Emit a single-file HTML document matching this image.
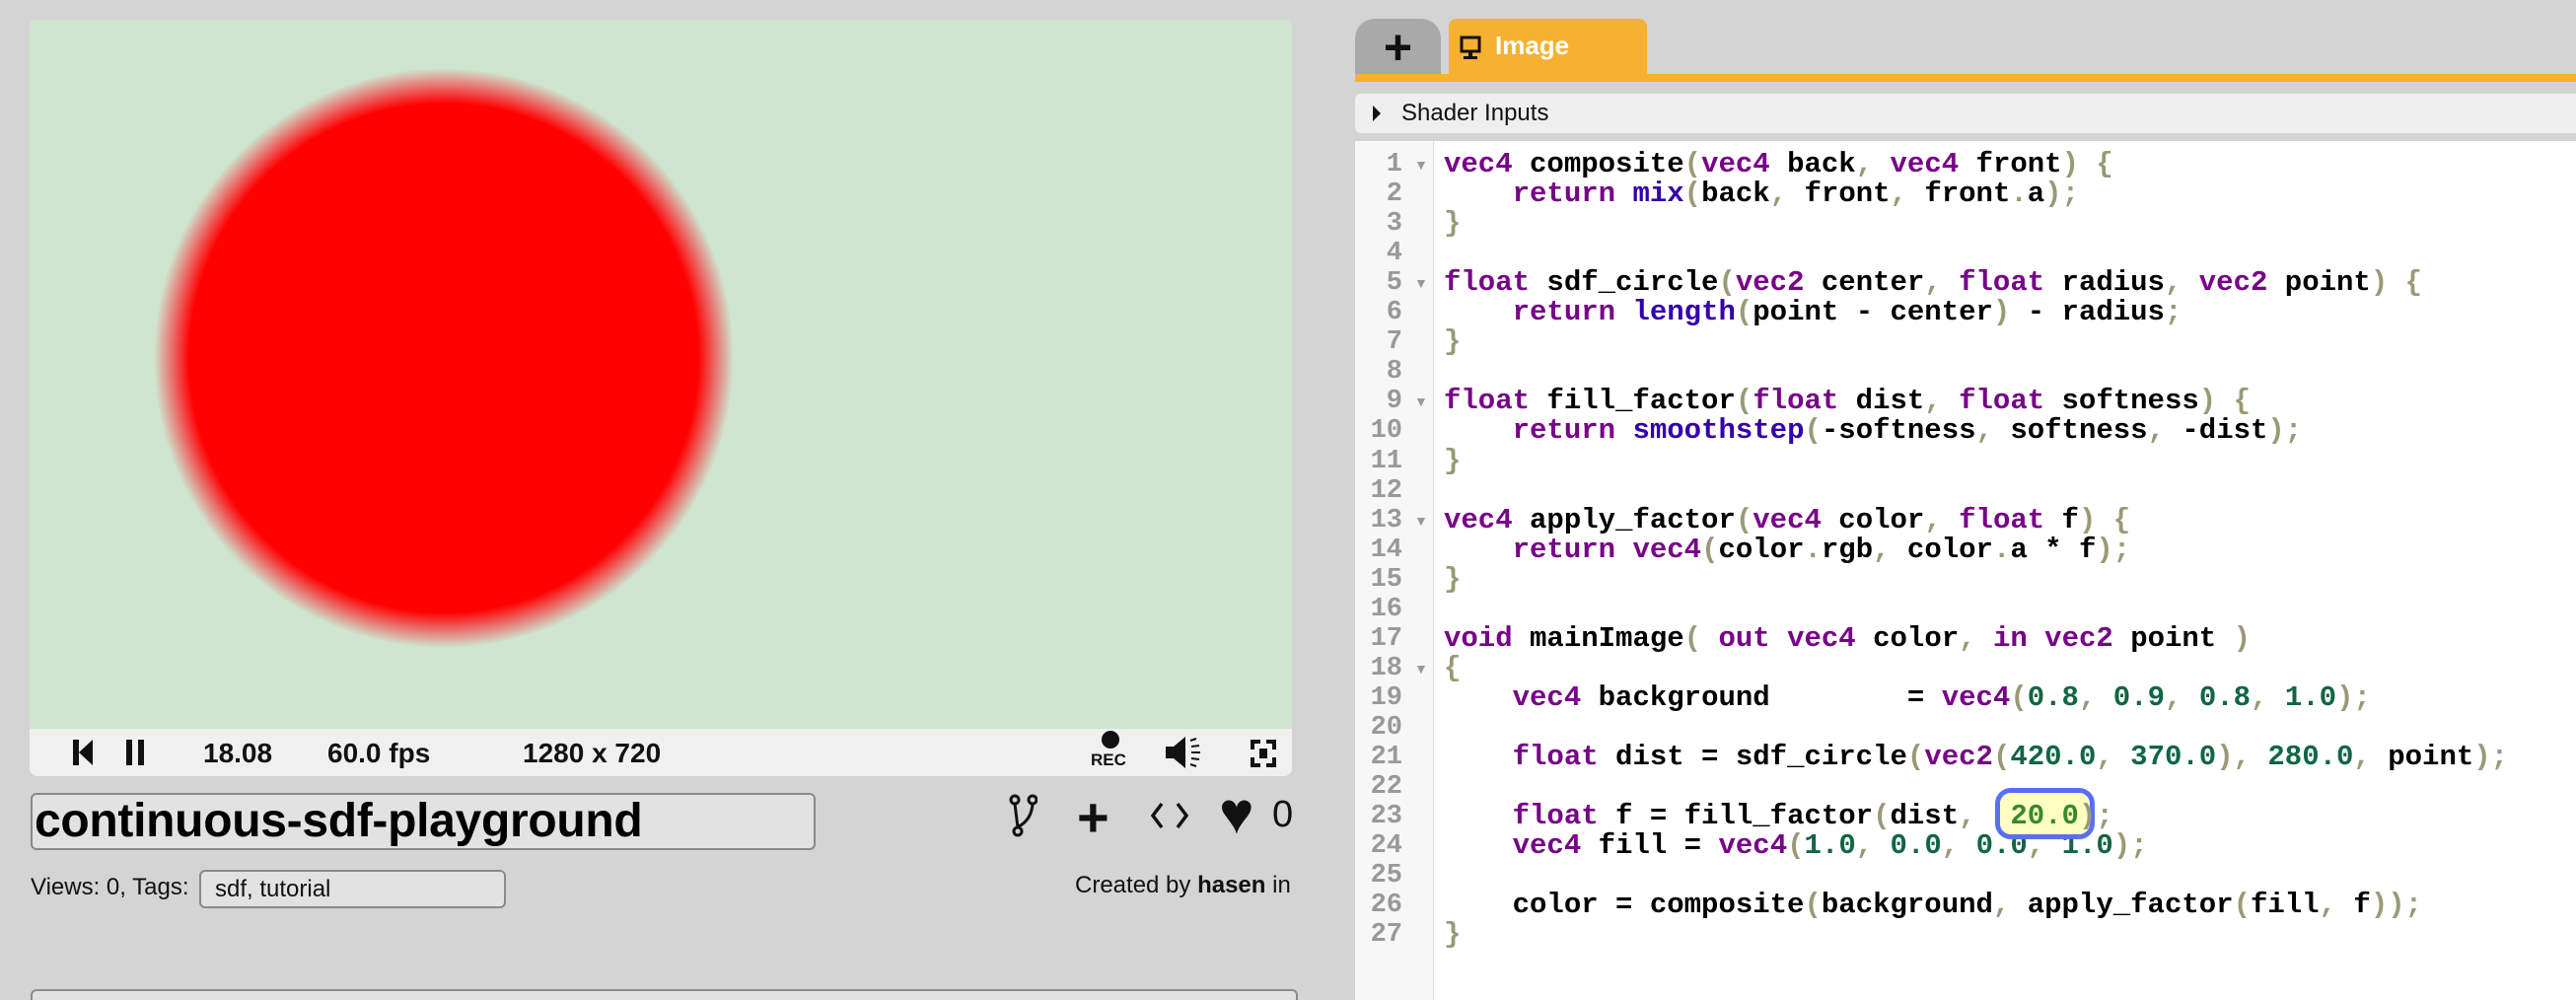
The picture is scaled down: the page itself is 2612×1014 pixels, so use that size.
<!DOCTYPE html>
<html style="overflow:hidden;height:1014px"><head><meta charset="utf-8"><style>
*{margin:0;padding:0;box-sizing:border-box}
body{width:2612px;height:1014px;overflow:hidden;background:#d4d4d4;font-family:"Liberation Sans",sans-serif;position:relative}
.abs{position:absolute}
#canvas{left:30px;top:20px;width:1280px;height:719px;border-radius:6px 6px 0 0;
background:radial-gradient(circle at 420px 343px,#ff0000 0px,#ff0000 258px,#e9716d 276px,#cfe5cf 294px,#cfe5cf 2000px)}
#bar{left:30px;top:739px;width:1280px;height:48px;background:#f0f0f0;border-radius:0 0 8px 8px;font-weight:bold;font-size:28px;color:#111}
#bar span{position:absolute;top:9px}
.box{background:#e2e2e2;border:2px solid #8a8a8a;border-radius:6px}
#code{left:1374px;top:143px;width:1238px;height:871px;background:#fff}
#gutter{left:1374px;top:143px;width:80px;height:871px;background:#f7f7f7;border-right:1px solid #ddd}
.ln{position:absolute;left:1370px;width:52px;text-align:right;font-family:"Liberation Mono",monospace;font-weight:bold;font-size:27px;color:#999;line-height:30px}
.fa{position:absolute;left:1434px;color:#999;font-size:14px;line-height:30px}
.cl{position:absolute;left:1464px;font-family:"Liberation Mono",monospace;font-weight:bold;font-size:29px;line-height:30px;white-space:pre;color:#000}
.k{color:#708}.b{color:#30a}.n{color:#164}.p{color:#997}
</style></head><body>
<div id="canvas" class="abs"></div>
<div id="bar" class="abs">
 <svg class="abs" style="left:44px;top:11px" width="22" height="26"><rect x="0" y="0" width="6" height="26" fill="#111"/><polygon points="6,13 20,0 20,26" fill="#111"/></svg>
 <svg class="abs" style="left:98px;top:11px" width="20" height="26"><rect x="0" y="0" width="6" height="26" fill="#111"/><rect x="12" y="0" width="6" height="26" fill="#111"/></svg>
 <span style="left:176px">18.08</span>
 <span style="left:302px">60.0 fps</span>
 <span style="left:500px">1280 x 720</span>
 <div class="abs" style="left:1087px;top:2px;width:18px;height:18px;border-radius:50%;background:#111"></div>
 <div class="abs" style="left:1076px;top:22px;font-size:17px;font-weight:bold">REC</div>
 <svg class="abs" style="left:1150px;top:6px" width="40" height="36"><polygon points="2,12 10,12 22,2 22,34 10,24 2,24" fill="#111"/><path d="M27 6 L33 4 M28 12 L36 11 M28 18 L37 18 M28 24 L36 25 M27 30 L33 32" stroke="#111" stroke-width="2"/></svg>
 <svg class="abs" style="left:1238px;top:11px" width="26" height="28"><path d="M0 0h10v4h-6v6h-4z M26 0h-10v4h6v6h4z M0 28h10v-4h-6v-6h-4z M26 28h-10v-4h6v-6h4z M9 9h8v10h-8z" fill="#111"/></svg>
</div>
<div class="abs box" style="left:31px;top:804px;width:796px;height:58px;font-size:48px;font-weight:bold;line-height:54px;padding-left:2px;color:#000;letter-spacing:-0.3px">continuous-sdf-playground</div>
<svg class="abs" style="left:1022px;top:805px" width="30" height="44"><circle cx="7" cy="6" r="4" fill="none" stroke="#111" stroke-width="3"/><circle cx="25" cy="6" r="4" fill="none" stroke="#111" stroke-width="3"/><circle cx="10" cy="38" r="4" fill="none" stroke="#111" stroke-width="3"/><path d="M7 10 L10 34 M25 10 Q24 26 11 33" fill="none" stroke="#111" stroke-width="3"/></svg>
<div class="abs" style="left:1092px;top:796px;font-size:56px;font-weight:bold;color:#111">+</div>
<svg class="abs" style="left:1166px;top:812px" width="40" height="30"><path d="M12 3 L3 15 L12 27 M28 3 L37 15 L28 27" fill="none" stroke="#111" stroke-width="3.5"/></svg>
<div class="abs" style="left:1236px;top:790px;font-size:60px;font-weight:bold;color:#111">♥</div>
<div class="abs" style="left:1290px;top:805px;font-size:38px;color:#111">0</div>
<div class="abs" style="left:31px;top:886px;font-size:24px;color:#111">Views: 0, Tags:</div>
<div class="abs box" style="left:202px;top:882px;width:311px;height:39px;font-size:24px;line-height:35px;padding-left:14px;color:#111">sdf, tutorial</div>
<div class="abs" style="left:1090px;top:884px;font-size:24px;color:#111">Created by <b>hasen</b> in</div>
<div class="abs" style="left:31px;top:1003px;width:1285px;height:11px;background:#e2e2e2;border:2px solid #8a8a8a;border-bottom:none;border-radius:6px 6px 0 0"></div>
<!-- right -->
<div class="abs" style="left:1374px;top:19px;width:87px;height:58px;background:#a9a9a9;border-radius:20px 20px 0 0;font-size:50px;font-weight:bold;text-align:center;line-height:58px;color:#111">+</div>
<div class="abs" style="left:1469px;top:19px;width:201px;height:58px;background:#f6b132;border-radius:8px 8px 0 0"></div>
<svg class="abs" style="left:1480px;top:36px" width="22" height="26"><rect x="2" y="2" width="18" height="14" fill="none" stroke="#111" stroke-width="3"/><rect x="9" y="16" width="4" height="6" fill="#111"/><rect x="4" y="21" width="14" height="3" fill="#111"/></svg>
<div class="abs" style="left:1516px;top:31px;font-size:26px;font-weight:bold;color:#fff">Image</div>
<div class="abs" style="left:1374px;top:75px;width:1238px;height:8px;background:#f6b132"></div>
<div class="abs" style="left:1374px;top:95px;width:1238px;height:40px;background:#efefef;border-radius:6px 0 0 6px"></div>
<svg class="abs" style="left:1390px;top:105px" width="12" height="20"><polygon points="2,2 10,10 2,18" fill="#111"/></svg>
<div class="abs" style="left:1421px;top:101px;font-size:24px;color:#111">Shader Inputs</div>
<div id="code" class="abs"></div>
<div id="gutter" class="abs"></div>
<div id="lines"></div>
<div class="abs" style="left:2023px;top:799px;width:101px;height:52px;border:5px solid #5a6ff0;border-radius:16px"></div>
<div class="abs" style="left:2028px;top:804px;width:91px;height:42px;background:#ffffc4;border-radius:11px;z-index:-0"></div>
<script>
const L=[
'<span class="k">vec4</span> composite<span class="p">(</span><span class="k">vec4</span> back<span class="p">,</span> <span class="k">vec4</span> front<span class="p">)</span> <span class="p">{</span>',
'    <span class="k">return</span> <span class="b">mix</span><span class="p">(</span>back<span class="p">,</span> front<span class="p">,</span> front<span class="p">.</span>a<span class="p">);</span>',
'<span class="p">}</span>','',
'<span class="k">float</span> sdf_circle<span class="p">(</span><span class="k">vec2</span> center<span class="p">,</span> <span class="k">float</span> radius<span class="p">,</span> <span class="k">vec2</span> point<span class="p">)</span> <span class="p">{</span>',
'    <span class="k">return</span> <span class="b">length</span><span class="p">(</span>point - center<span class="p">)</span> - radius<span class="p">;</span>',
'<span class="p">}</span>','',
'<span class="k">float</span> fill_factor<span class="p">(</span><span class="k">float</span> dist<span class="p">,</span> <span class="k">float</span> softness<span class="p">)</span> <span class="p">{</span>',
'    <span class="k">return</span> <span class="b">smoothstep</span><span class="p">(</span>-softness<span class="p">,</span> softness<span class="p">,</span> -dist<span class="p">);</span>',
'<span class="p">}</span>','',
'<span class="k">vec4</span> apply_factor<span class="p">(</span><span class="k">vec4</span> color<span class="p">,</span> <span class="k">float</span> f<span class="p">)</span> <span class="p">{</span>',
'    <span class="k">return</span> <span class="k">vec4</span><span class="p">(</span>color<span class="p">.</span>rgb<span class="p">,</span> color<span class="p">.</span>a * f<span class="p">);</span>',
'<span class="p">}</span>','',
'<span class="k">void</span> mainImage<span class="p">(</span> <span class="k">out</span> <span class="k">vec4</span> color<span class="p">,</span> <span class="k">in</span> <span class="k">vec2</span> point <span class="p">)</span>',
'<span class="p">{</span>',
'    <span class="k">vec4</span> background        = <span class="k">vec4</span><span class="p">(</span><span class="n">0.8</span><span class="p">,</span> <span class="n">0.9</span><span class="p">,</span> <span class="n">0.8</span><span class="p">,</span> <span class="n">1.0</span><span class="p">);</span>','',
'    <span class="k">float</span> dist = sdf_circle<span class="p">(</span><span class="k">vec2</span><span class="p">(</span><span class="n">420.0</span><span class="p">,</span> <span class="n">370.0</span><span class="p">),</span> <span class="n">280.0</span><span class="p">,</span> point<span class="p">);</span>','',
'    <span class="k">float</span> f = fill_factor<span class="p">(</span>dist<span class="p">,</span>  <span class="n" style="color:#3a8a2a;position:relative;z-index:3">20.0</span><span class="p">);</span>',
'    <span class="k">vec4</span> fill = <span class="k">vec4</span><span class="p">(</span><span class="n">1.0</span><span class="p">,</span> <span class="n">0.0</span><span class="p">,</span> <span class="n">0.0</span><span class="p">,</span> <span class="n">1.0</span><span class="p">);</span>','',
'    color = composite<span class="p">(</span>background<span class="p">,</span> apply_factor<span class="p">(</span>fill<span class="p">,</span> f<span class="p">));</span>',
'<span class="p">}</span>'];
const folds=[1,5,9,13,18];let h='';
L.forEach((s,i)=>{const t=(152+i*30.05).toFixed(1);
h+=`<div class="ln" style="top:${t}px">${i+1}</div>`;
if(folds.includes(i+1))h+=`<div class="fa" style="top:${t}px">▼</div>`;
h+=`<div class="cl" style="top:${t}px;${i==22?'z-index:3':''}">${s}</div>`;});
document.getElementById('lines').innerHTML=h;
</script>
</body></html>
